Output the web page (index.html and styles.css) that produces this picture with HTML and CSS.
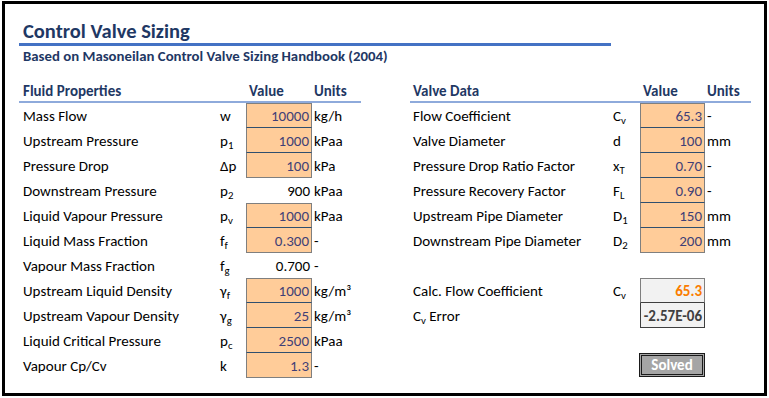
FILE: index.html
```html
<!DOCTYPE html>
<html lang="en">
<head>
<meta charset="utf-8">
<title>Control Valve Sizing</title>
<link rel="stylesheet" href="styles.css">
</head>
<body>
<div class="sheet">
  <header class="head">
    <h1 class="title">Control Valve Sizing</h1>
    <p class="subtitle">Based on Masoneilan Control Valve Sizing Handbook (2004)</p>
  </header>

  <div class="tables">
    <section class="grid fluid">
      <div class="hd lbl span2">Fluid Properties</div>
      <div class="hd val">Value</div>
      <div class="hd unit">Units</div>

      <div class="lbl">Mass Flow</div><div class="sym">w</div><div class="num in top">10000</div><div class="unit">kg/h</div>
      <div class="lbl">Upstream Pressure</div><div class="sym">p<sub>1</sub></div><div class="num in">1000</div><div class="unit">kPaa</div>
      <div class="lbl">Pressure Drop</div><div class="sym">Δp</div><div class="num in last">100</div><div class="unit">kPa</div>
      <div class="lbl">Downstream Pressure</div><div class="sym">p<sub>2</sub></div><div class="num">900</div><div class="unit">kPaa</div>
      <div class="lbl">Liquid Vapour Pressure</div><div class="sym">p<sub>v</sub></div><div class="num in top">1000</div><div class="unit">kPaa</div>
      <div class="lbl">Liquid Mass Fraction</div><div class="sym">f<sub>f</sub></div><div class="num in last">0.300</div><div class="unit">-</div>
      <div class="lbl">Vapour Mass Fraction</div><div class="sym">f<sub>g</sub></div><div class="num">0.700</div><div class="unit">-</div>
      <div class="lbl">Upstream Liquid Density</div><div class="sym">γ<sub>f</sub></div><div class="num in top">1000</div><div class="unit">kg/m³</div>
      <div class="lbl">Upstream Vapour Density</div><div class="sym">γ<sub>g</sub></div><div class="num in">25</div><div class="unit">kg/m³</div>
      <div class="lbl">Liquid Critical Pressure</div><div class="sym">p<sub>c</sub></div><div class="num in">2500</div><div class="unit">kPaa</div>
      <div class="lbl">Vapour Cp/Cv</div><div class="sym">k</div><div class="num in last">1.3</div><div class="unit">-</div>
    </section>

    <section class="grid valve">
      <div class="hd lbl span2">Valve Data</div>
      <div class="hd val">Value</div>
      <div class="hd unit">Units</div>

      <div class="lbl">Flow Coefficient</div><div class="sym">C<sub>v</sub></div><div class="num in top">65.3</div><div class="unit">-</div>
      <div class="lbl">Valve Diameter</div><div class="sym">d</div><div class="num in">100</div><div class="unit">mm</div>
      <div class="lbl">Pressure Drop Ratio Factor</div><div class="sym">x<sub>T</sub></div><div class="num in">0.70</div><div class="unit">-</div>
      <div class="lbl">Pressure Recovery Factor</div><div class="sym">F<sub>L</sub></div><div class="num in">0.90</div><div class="unit">-</div>
      <div class="lbl">Upstream Pipe Diameter</div><div class="sym">D<sub>1</sub></div><div class="num in">150</div><div class="unit">mm</div>
      <div class="lbl">Downstream Pipe Diameter</div><div class="sym">D<sub>2</sub></div><div class="num in last">200</div><div class="unit">mm</div>
      <div class="blank full"></div>
      <div class="lbl">Calc. Flow Coefficient</div><div class="sym">C<sub>v</sub></div><div class="num calc">65.3</div><div class="unit"></div>
      <div class="lbl">C<sub>v</sub> Error</div><div class="sym"></div><div class="num out">-2.57E-06</div><div class="unit"></div>
      <div class="blank full"></div>
      <div class="lbl"></div><div class="sym"></div><div class="btn-cell"><span class="check">Solved</span></div><div class="unit"></div>
    </section>
  </div>
</div>
</body>
</html>
```

FILE: styles.css
```css
html, body {
  margin: 0;
  padding: 0;
  background: #ffffff;
}

body {
  font-family: "Carlito", "Calibri", "Lato", sans-serif;
  font-size: 15px;
  color: #000000;
}

/* framed sheet area */
.sheet {
  box-sizing: border-box;
  width: 765px;
  height: 395px;
  margin: 1px 0 0 2px;
  border: 3px solid #000000;
  padding-left: 14px;
}

/* heading block */
.title {
  box-sizing: border-box;
  width: 592px;
  margin: 0;
  padding: 16px 0 0 4px;
  font-size: 20.5px;
  font-weight: 700;
  line-height: 23px;
  color: #1f3864;
  border-bottom: 3px solid #4472c4;
}

.subtitle {
  margin: 0;
  padding: 1px 0 0 4px;
  font-size: 14.8px;
  font-weight: 700;
  line-height: 19px;
  color: #1f3864;
}

/* the two data tables */
.tables {
  display: flex;
  gap: 49px;
  margin-top: 12px;
}

.grid {
  display: grid;
  grid-auto-rows: 25px;
}

.fluid {
  grid-template-columns: 201px 26px 66px 49px;
}

.valve {
  grid-template-columns: 203px 27px 65px 46px;
}

.grid > div {
  box-sizing: border-box;
  padding-top: 2px;
  line-height: 23px;
  white-space: nowrap;
}

.fluid .lbl { padding-left: 4px; }
.valve .lbl { padding-left: 3px; }

.span2 { grid-column: span 2; }
.full { grid-column: 1 / -1; }

/* header row with light underline */
.grid > .hd {
  padding-top: 4px;
  line-height: 19px;
  font-weight: 700;
  color: #1f3864;
  border-bottom: 2px solid #8eaadb;
}

.grid > .hd.val { padding-left: 3px; }

.unit { padding-left: 2px; }

sub {
  font-size: 0.72em;
  line-height: 0;
  vertical-align: -0.3em;
}

.num {
  text-align: right;
  padding-right: 2px;
}

/* input cells */
.grid > .in {
  background: #ffcc99;
  color: #3f3f76;
  border-left: 1px solid #7f7f7f;
  border-right: 1px solid #7f7f7f;
  border-bottom: 1px solid #2f4f6f;
  padding-top: 3px;
  line-height: 21px;
}

.grid > .in.top {
  border-top: 1px solid #7f7f7f;
  padding-top: 2px;
  line-height: 21px;
}

.grid > .in.last {
  border-bottom-color: #7f7f7f;
}

/* calculated value */
.grid > .calc {
  background: #f2f2f2;
  color: #fa7d00;
  font-weight: 700;
  border: 1px solid #7f7f7f;
  border-bottom-color: #3f3f3f;
  padding-top: 2px;
  line-height: 21px;
}

/* result cell */
.grid > .out {
  background: #f2f2f2;
  color: #3f3f3f;
  font-weight: 700;
  border: 1px solid #3f3f3f;
  border-top: 0;
  padding-top: 3px;
  line-height: 21px;
}

/* status indicator */
.grid > .btn-cell {
  padding: 0;
  display: flex;
}

.check {
  box-sizing: border-box;
  width: 67px;
  height: 24px;
  margin-left: -1px;
  border: 3px double #1a1a1a;
  background: #a5a5a5;
  color: #ffffff;
  font-weight: 700;
  text-align: center;
  line-height: 18px;
}
```
